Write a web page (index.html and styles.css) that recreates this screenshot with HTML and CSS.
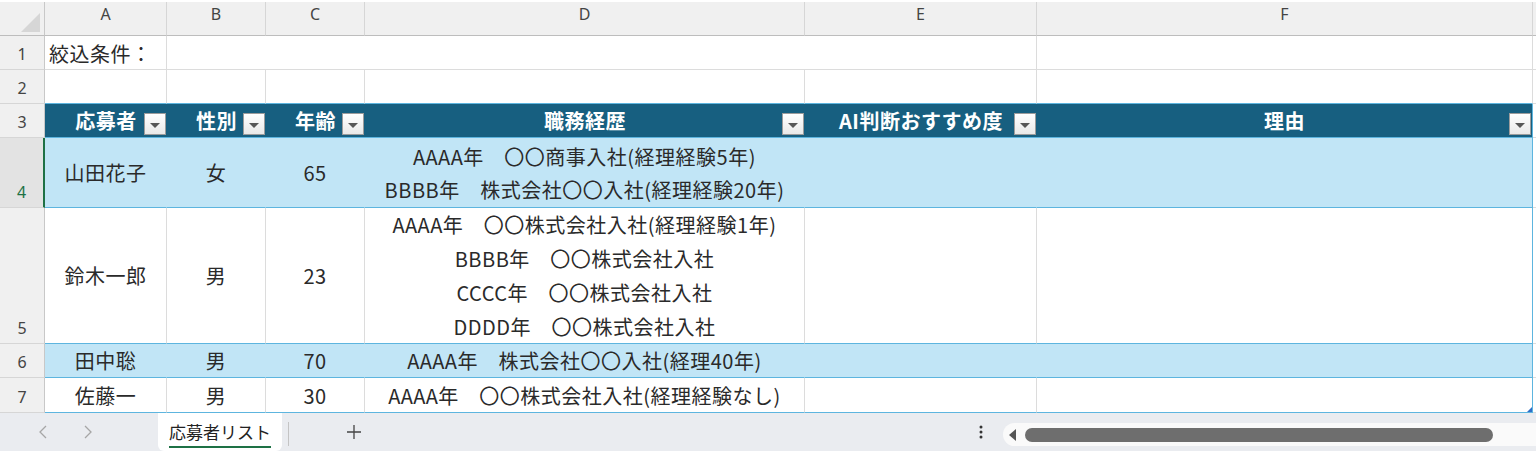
FILE: index.html
```html
<!DOCTYPE html>
<html lang="ja">
<head>
<meta charset="utf-8">
<title>応募者リスト</title>
<link rel="stylesheet" href="styles.css">
</head>
<body>
<div class="sheet">
  <div class="corner"><svg width="44" height="33" viewBox="0 0 44 33"><polygon points="40,11 40,30 21,30" fill="#d6d6d6"/></svg></div>
  <div class="ch">A</div><div class="ch">B</div><div class="ch">C</div><div class="ch">D</div><div class="ch">E</div><div class="ch">F</div><div class="ch end"></div>

  <div class="rh">1</div>
  <div class="c lefttext">絞込条件：</div>
  <div class="c span4"></div>
  <div class="c"></div>
  <div class="c end"></div>

  <div class="rh">2</div>
  <div class="c top"></div><div class="c top"></div><div class="c top"></div><div class="c top"></div><div class="c top"></div><div class="c top last"></div>
  <div class="c end"></div>

  <div class="rh">3</div>
  <div class="th">応募者<span class="fb"></span></div>
  <div class="th">性別<span class="fb"></span></div>
  <div class="th">年齢<span class="fb"></span></div>
  <div class="th">職務経歴<span class="fb"></span></div>
  <div class="th">AI判断おすすめ度<span class="fb"></span></div>
  <div class="th last">理由<span class="fb"></span></div>
  <div class="c end"></div>

  <div class="rh sel">4</div>
  <div class="td band">山田花子</div>
  <div class="td band">女</div>
  <div class="td band">65</div>
  <div class="td band"><div class="lines tight"><div>AAAA年　〇〇商事入社(経理経験5年)</div><div>BBBB年　株式会社〇〇入社(経理経験20年)</div></div></div>
  <div class="td band"></div>
  <div class="td band last"></div>
  <div class="c end"></div>

  <div class="rh">5</div>
  <div class="td">鈴木一郎</div>
  <div class="td">男</div>
  <div class="td">23</div>
  <div class="td"><div class="lines"><div>AAAA年　〇〇株式会社入社(経理経験1年)</div><div>BBBB年　〇〇株式会社入社</div><div>CCCC年　〇〇株式会社入社</div><div>DDDD年　〇〇株式会社入社</div></div></div>
  <div class="td"></div>
  <div class="td last"></div>
  <div class="c end"></div>

  <div class="rh">6</div>
  <div class="td band">田中聡</div>
  <div class="td band">男</div>
  <div class="td band">70</div>
  <div class="td band">AAAA年　株式会社〇〇入社(経理40年)</div>
  <div class="td band"></div>
  <div class="td band last"></div>
  <div class="c end"></div>

  <div class="rh">7</div>
  <div class="td">佐藤一</div>
  <div class="td">男</div>
  <div class="td">30</div>
  <div class="td">AAAA年　〇〇株式会社入社(経理経験なし)</div>
  <div class="td"></div>
  <div class="td last"><span class="handle"></span></div>
  <div class="c end"></div>
</div>

<div class="tabbar">
  <div class="nav">
    <svg class="arrow" width="10" height="14" viewBox="0 0 10 14"><polyline points="8,1 2,7 8,13" fill="none" stroke="#a6a6a6" stroke-width="1.3"/></svg>
    <svg class="arrow" width="10" height="14" viewBox="0 0 10 14"><polyline points="2,1 8,7 2,13" fill="none" stroke="#a6a6a6" stroke-width="1.3"/></svg>
  </div>
  <div class="tab"><span class="tablabel">応募者リスト</span></div>
  <div class="sep"></div>
  <div class="plus"><svg width="16" height="16" viewBox="0 0 16 16"><path d="M8 1V15M1 8H15" stroke="#444" stroke-width="1.3" fill="none"/></svg></div>
  <div class="dots"><svg width="4" height="14" viewBox="0 0 4 14"><circle cx="2" cy="2" r="1.5" fill="#333"/><circle cx="2" cy="7" r="1.5" fill="#333"/><circle cx="2" cy="12" r="1.5" fill="#333"/></svg></div>
  <div class="track">
    <svg class="tri" width="8" height="12" viewBox="0 0 8 12"><polygon points="7,0 7,12 0,6" fill="#555"/></svg>
    <div class="thumb"></div>
  </div>
</div>
</body>
</html>
```
FILE: styles.css
```css
* { box-sizing: border-box; margin: 0; padding: 0; }
html, body { width: 1536px; height: 451px; overflow: hidden; background: #fff; }
body { font-family: "Noto Sans CJK JP", "Noto Sans", sans-serif; color: #222; }

.sheet {
  display: grid;
  grid-template-columns: 45px 122px 99px 99px 440px 232px 496px 3px;
  grid-template-rows: 34px 34px 34px 34px 70px 136px 34px 35px;
  padding-top: 2px;
}

.corner {
  background: #f0f0f0;
  border-right: 1px solid #c8c8c8;
  border-bottom: 1px solid #bdbdbd;
}
.corner svg { display: block; }

.ch {
  background: #f0f0f0;
  border-right: 1px solid #d6d6d6;
  border-bottom: 1px solid #bdbdbd;
  font-family: "Noto Sans", sans-serif;
  font-size: 16px;
  line-height: 24px;
  color: #444;
  text-align: center;
}
.ch.end { border-right: none; }

.rh {
  background: #f0f0f0;
  border-right: 1px solid #c8c8c8;
  border-bottom: 1px solid #d6d6d6;
  font-family: "Noto Sans", sans-serif;
  font-size: 16px;
  line-height: 30px;
  color: #444;
  display: flex;
  align-items: flex-end;
  justify-content: center;
}
.rh.sel {
  background: #e3e3e3;
  color: #1e7145;
  border-right: 2px solid #1e7145;
}

.c {
  border-right: 1px solid #dcdcdc;
  border-bottom: 1px solid #dcdcdc;
  font-size: 20px;
  letter-spacing: 0.5px;
  color: #2a2a2a;
  display: flex;
  align-items: center;
}
.c.lefttext { padding-left: 4px; padding-top: 1px; }
.c.span4 { grid-column: span 4; }
.c.top { border-bottom-color: #5db5df; }
.c.top.last { border-right-color: #dcdcdc; }
.c.end { border-right: none; border-bottom-color: #dcdcdc; }

.th {
  position: relative;
  background: #175f80;
  color: #fff;
  font-weight: bold;
  font-size: 20px;
  letter-spacing: 0.5px;
  border-bottom: 1px solid #5db5df;
  display: flex;
  align-items: center;
  justify-content: center;
}
.th.last { border-right: 1px solid #5db5df; }

.fb {
  position: absolute;
  right: 1px;
  bottom: 2px;
  width: 22px;
  height: 22px;
  border: 1px solid #9c9c9c;
  background: linear-gradient(#ffffff, #e9e9e9);
  display: flex;
  align-items: center;
  justify-content: center;
}
.fb::after {
  content: "";
  border-left: 5px solid transparent;
  border-right: 5px solid transparent;
  border-top: 5px solid #575757;
  margin-top: 2px;
}

.td {
  position: relative;
  font-size: 20px;
  letter-spacing: 0.5px;
  color: #2a2a2a;
  border-right: 1px solid #dcdcdc;
  border-bottom: 1px solid #5db5df;
  display: flex;
  align-items: center;
  justify-content: center;
  white-space: nowrap;
}
.td.band { background: #c1e5f6; border-right-color: #c1e5f6; }
.td.last { border-right: 1px solid #5db5df; }

.lines { text-align: center; line-height: 34px; }
.lines.tight { line-height: 33px; }

.handle {
  position: absolute;
  right: 0;
  bottom: 0;
  width: 0;
  height: 0;
  border-left: 5px solid transparent;
  border-bottom: 5px solid #2f6fc8;
}

.tabbar {
  height: 38px;
  background: #eaecf0;
  display: flex;
  align-items: stretch;
}
.nav {
  width: 158px;
  display: flex;
  align-items: center;
  gap: 35px;
  padding-left: 38px;
}
.arrow { display: block; }
.tab {
  width: 124px;
  background: #fff;
  border-radius: 0 0 6px 6px;
  display: flex;
  align-items: center;
  justify-content: center;
}
.tablabel {
  font-size: 17px;
  color: #222;
  line-height: 24px;
  padding-bottom: 2px;
  border-bottom: 2px solid #1e7145;
  margin-top: 4px;
}
.sep {
  width: 1px;
  background: #c4c4c4;
  margin: 9px 0 5px 6px;
}
.plus {
  width: 130px;
  display: flex;
  align-items: center;
  padding-left: 57px;
}
.plus svg { display: block; }
.dots {
  display: flex;
  align-items: center;
  padding-left: 560px;
  padding-right: 20px;
}
.track {
  flex: 1;
  margin: 10px 0 5px 0;
  background: #fafafa;
  border-radius: 12px 0 0 12px;
  display: flex;
  align-items: center;
  padding-left: 6px;
}
.tri { display: block; }
.thumb {
  width: 468px;
  height: 14px;
  margin-left: 8px;
  background: #6e6e6e;
  border-radius: 7px;
}
```
